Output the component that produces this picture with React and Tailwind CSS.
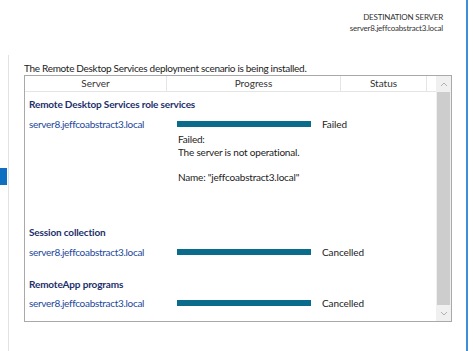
import React from "react";

const font = { fontFamily: '"Segoe UI", Lato, "Noto Sans", sans-serif' };

function Row({ status }) {
  return (
    <div className="flex h-[16px] items-center">
      <div className="w-[152px] pl-[4px] text-[10px] tracking-[-0.3px] text-[#22479a]">server8.jeffcoabstract3.local</div>
      <div className="h-[6px] w-[134px] bg-[#0b6b8d]" />
      <div className="pl-[11px] text-[10px] tracking-[-0.1px] text-[#222]">{status}</div>
    </div>
  );
}

function Group({ children }) {
  return <div className="pl-[4px] text-[10px] font-bold tracking-[-0.15px] text-[#1c2f6b]">{children}</div>;
}

export default function App() {
  return (
    <div className="flex h-[351px] w-[474px] overflow-hidden bg-white text-[#222]" style={font}>
      <div className="w-[8px] shrink-0">
        <div className="mt-[168px] h-[17px] w-[7px] bg-[#0f6fc0]" />
      </div>
      <div className="flex min-w-0 flex-1 flex-col">
        <div className="flex h-[55px] flex-col items-end pr-[23px] pt-[12px] text-[8px] leading-[11px] tracking-[-0.2px] text-[#333]">
          <div>DESTINATION SERVER</div>
          <div>server8.jeffcoabstract3.local</div>
        </div>
        <div className="flex-1 border-l border-[#e2e2e2] pl-[15px] pt-[7px]">
          <div className="h-[13px] text-[10px] leading-[13px] tracking-[-0.3px]">The Remote Desktop Services deployment scenario is being installed.</div>
          <div className="flex h-[247px] w-[428px] border border-[#a9a9a9]">
            <div className="flex flex-1 flex-col">
              <div className="flex h-[16px] border-b border-[#e5e5e5] text-[10px] leading-[15px] text-[#333]">
                <div className="w-[142px] border-r border-[#e5e5e5] text-center">Server</div>
                <div className="w-[174px] border-r border-[#e5e5e5] text-center">Progress</div>
                <div className="w-[86px] border-r border-[#e5e5e5] text-center">Status</div>
              </div>
              <div className="pt-[6px] leading-[13px]">
                <Group>Remote Desktop Services role services</Group>
                <div className="mt-[5px]">
                  <Row status="Failed" />
                </div>
                <div className="ml-[153px] mt-[1px] text-[10px] leading-[13px] tracking-[-0.2px]">
                  <div>Failed:</div>
                  <div>The server is not operational.</div>
                  <div className="h-[12px]" />
                  <div>Name: "jeffcoabstract3.local"</div>
                </div>
                <div className="mt-[42px]">
                  <Group>Session collection</Group>
                </div>
                <div className="mt-[5px]">
                  <Row status="Cancelled" />
                </div>
                <div className="mt-[18px]">
                  <Group>RemoteApp programs</Group>
                </div>
                <div className="mt-[4px]">
                  <Row status="Cancelled" />
                </div>
              </div>
            </div>
            <div className="flex w-[15px] flex-col bg-[#f0f0f0]">
              <div className="flex h-[16px] items-center justify-center">
                <svg width="8" height="5" viewBox="0 0 8 5"><path d="M1 4 L4 1 L7 4" fill="none" stroke="#b0b0b0" strokeWidth="1" /></svg>
              </div>
              <div className="mx-[1px] flex-1 bg-[#cdcdcd]" />
              <div className="flex h-[16px] items-center justify-center">
                <svg width="8" height="5" viewBox="0 0 8 5"><path d="M1 1 L4 4 L7 1" fill="none" stroke="#b0b0b0" strokeWidth="1" /></svg>
              </div>
            </div>
          </div>
        </div>
      </div>
      <div className="w-[2px] shrink-0 bg-[#3c8fd4]" />
      <div className="w-[6px] shrink-0 bg-white" />
    </div>
  );
}
